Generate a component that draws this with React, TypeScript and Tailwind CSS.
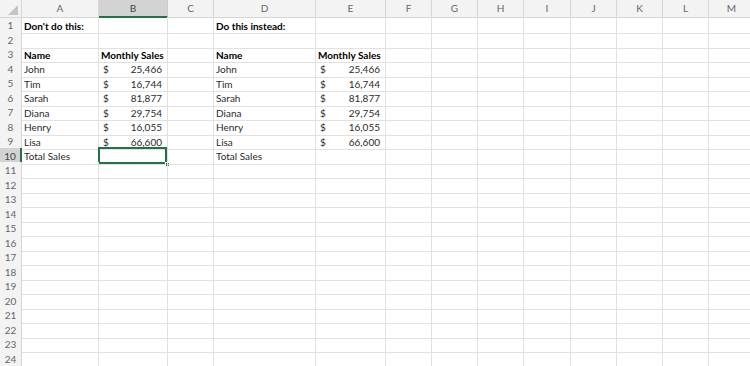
import React from 'react';

const COLS = ['A', 'B', 'C', 'D', 'E', 'F', 'G', 'H', 'I', 'J', 'K', 'L', 'M'];
const NUM_ROWS = 24;

const sales: [string, string][] = [
  ['John', '25,466'],
  ['Tim', '16,744'],
  ['Sarah', '81,877'],
  ['Diana', '29,754'],
  ['Henry', '16,055'],
  ['Lisa', '66,600'],
];

type Cell = { text?: string; bold?: boolean; money?: string };

// row index (1-based) -> column letter -> cell
const data: Record<number, Record<string, Cell>> = {
  1: { A: { text: "Don't do this:", bold: true }, D: { text: 'Do this instead:', bold: true } },
  3: {
    A: { text: 'Name', bold: true },
    B: { text: 'Monthly Sales', bold: true },
    D: { text: 'Name', bold: true },
    E: { text: 'Monthly Sales', bold: true },
  },
  10: { A: { text: 'Total Sales' }, D: { text: 'Total Sales' } },
};
sales.forEach(([name, amt], i) => {
  data[4 + i] = { A: { text: name }, B: { money: amt }, D: { text: name }, E: { money: amt } };
});

const gridCols =
  'grid grid-cols-[22px_77px_69px_46px_102px_70px_46px_46px_46px_47px_46px_46px_46px_46px]';

export default function App() {
  return (
    <div className="w-[750px] h-[366px] overflow-hidden bg-white font-['Lato',sans-serif] text-[10px] text-[#2b2b2b]">
      {/* column headers */}
      <div className={`${gridCols} h-[17px]`}>
        <div className="relative bg-[#f3f3f3] border-r border-b border-[#d6d6d6]">
          <div className="absolute right-[3px] bottom-[2px] w-0 h-0 border-l-[10px] border-l-transparent border-b-[10px] border-b-[#c4c4c4]" />
        </div>
        {COLS.map((c) => (
          <div
            key={c}
            className={
              c === 'B'
                ? 'flex items-center justify-center bg-[#d3d3d3] border-r border-[#c8c8c8] border-b-2 border-b-[#217346] text-[#444] pt-[1px]'
                : 'flex items-center justify-center bg-[#f3f3f3] border-r border-b border-[#d6d6d6] text-[#666]'
            }
          >
            {c}
          </div>
        ))}
      </div>

      {/* rows */}
      {Array.from({ length: NUM_ROWS }, (_, i) => i + 1).map((r) => (
        <div key={r} className={`${gridCols} h-[14.5px]`}>
          <div
            className={
              r === 10
                ? 'flex items-center justify-center pt-[1px] bg-[#d3d3d3] border-r-2 border-r-[#217346] border-b border-[#c8c8c8] text-[#444]'
                : 'flex items-center justify-center pt-[1px] bg-[#f3f3f3] border-r border-b border-[#d6d6d6] text-[#666]'
            }
          >
            {r}
          </div>
          {COLS.map((c) => {
            const cell = data[r]?.[c];
            const selected = r === 10 && c === 'B';
            return (
              <div
                key={c}
                className="relative flex items-center pt-[1px] border-r border-b border-[#e1e1e1] whitespace-nowrap overflow-visible"
              >
                {cell?.text && (
                  <span className={`pl-[2px] leading-none z-10 ${cell.bold ? 'font-bold text-black' : ''}`}>
                    {cell.text}
                  </span>
                )}
                {cell?.money && (
                  <div className="flex w-full justify-between pl-[4px] pr-[5px] leading-none">
                    <span>$</span>
                    <span>{cell.money}</span>
                  </div>
                )}
                {selected && (
                  <>
                    <div className="absolute -left-[1px] -top-[1px] right-0 bottom-0 border-2 border-[#217346]" />
                    <div className="absolute -right-[3px] -bottom-[3px] w-[5px] h-[5px] bg-[#217346] border border-white" />
                  </>
                )}
              </div>
            );
          })}
        </div>
      ))}
    </div>
  );
}
